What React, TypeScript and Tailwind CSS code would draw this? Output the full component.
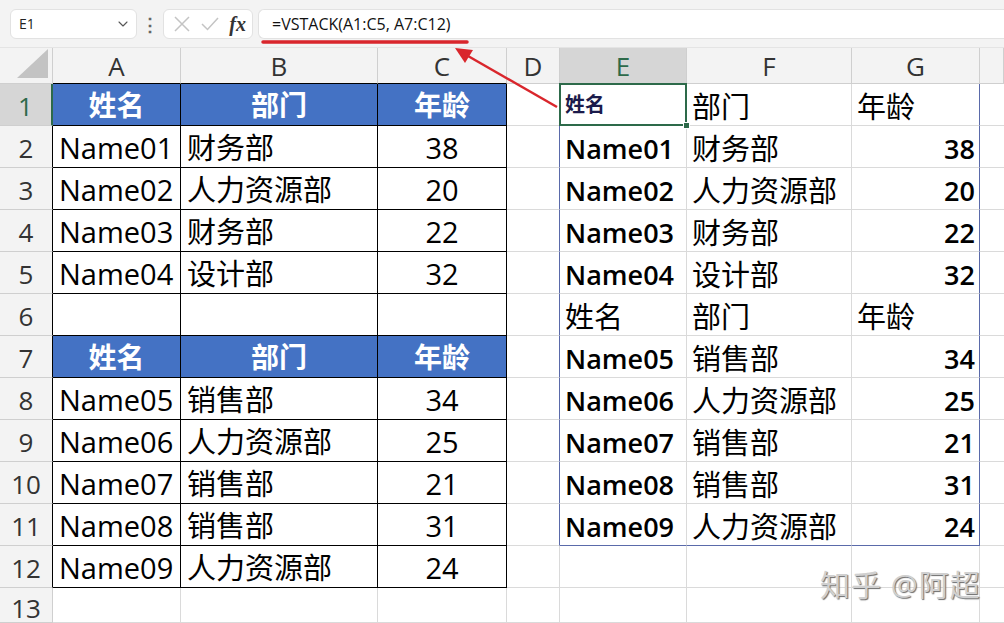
import { ChevronDown } from "lucide-react";

const leftRows: string[][] = [
  ["姓名", "部门", "年龄"],
  ["Name01", "财务部", "38"],
  ["Name02", "人力资源部", "20"],
  ["Name03", "财务部", "22"],
  ["Name04", "设计部", "32"],
  ["", "", ""],
  ["姓名", "部门", "年龄"],
  ["Name05", "销售部", "34"],
  ["Name06", "人力资源部", "25"],
  ["Name07", "销售部", "21"],
  ["Name08", "销售部", "31"],
  ["Name09", "人力资源部", "24"],
];

const rightRows: string[][] = [
  ["姓名", "部门", "年龄"],
  ["Name01", "财务部", "38"],
  ["Name02", "人力资源部", "20"],
  ["Name03", "财务部", "22"],
  ["Name04", "设计部", "32"],
  ["姓名", "部门", "年龄"],
  ["Name05", "销售部", "34"],
  ["Name06", "人力资源部", "25"],
  ["Name07", "销售部", "21"],
  ["Name08", "销售部", "31"],
  ["Name09", "人力资源部", "24"],
];

const colLetters = ["A", "B", "C", "D", "E", "F", "G", ""];

function LeftCell({ r, c }: { r: number; c: number }) {
  const text = leftRows[r - 1][c];
  const head = r === 1 || r === 7;
  if (head) {
    return (
      <div className="flex items-center justify-center border-r border-b border-black bg-[#4472c4] pt-[1px] text-[28px] font-bold text-white">
        {text}
      </div>
    );
  }
  return (
    <div
      className={`flex items-center border-r border-b border-black bg-white pt-[3px] text-[29px] text-black ${
        c === 2 ? "justify-center" : "justify-start pl-[6px]"
      }`}
    >
      {text}
    </div>
  );
}

function RightCell({ r, c }: { r: number; c: number }) {
  const text = r <= 11 ? rightRows[r - 1][c] : "";
  const rightEdge = c === 2 && r <= 11;
  const bottomEdge = r === 11;
  const border = `border-r border-b ${rightEdge ? "border-r-[#5a6aaa]" : "border-r-[#dadada]"} ${
    bottomEdge ? "border-b-[#5a6aaa]" : "border-b-[#dadada]"
  }`;
  if (r === 1 && c === 0) {
    return (
      <div className={`relative flex items-center pl-[5px] ${border}`}>
        <span className="text-[20px] font-bold text-[#1b1b4b]">{text}</span>
        <div className="absolute -left-[1px] -top-[1px] -right-[1px] -bottom-[1px] border-2 border-[#2d6a4a]" />
        <div className="absolute -bottom-[4px] -right-[4px] h-[7px] w-[7px] border border-white bg-[#2d6a4a]" />
      </div>
    );
  }
  const latin = /^[A-Za-z0-9]/.test(text);
  return (
    <div
      className={`flex items-center pt-[5px] ${border} ${c === 2 && latin ? "justify-end pr-[4px]" : "justify-start pl-[5px]"}`}
    >
      {latin ? (
        <span className="text-[27px] font-semibold text-black">{text}</span>
      ) : (
        <span className="text-[29px] text-black">{text}</span>
      )}
    </div>
  );
}

function Toolbar() {
  return (
    <div className="flex h-[48px] items-center border-b border-[#e4e4e4] bg-[#f3f3f3] pl-[10px]">
      <div className="flex h-[30px] w-[127px] items-center justify-between rounded-[6px] border border-[#e2e2e2] bg-white pl-[8px] pr-[5px] text-[14px] text-[#222]">
        <span>E1</span>
        <ChevronDown size={16} strokeWidth={1.6} className="text-[#555]" />
      </div>
      <div className="flex w-[26px] justify-center text-[18px] font-bold leading-none text-[#666]">⋮</div>
      <div className="flex h-[30px] w-[90px] items-center justify-between rounded-[6px] border border-[#e2e2e2] bg-white px-[6px]">
        <svg width="18" height="18" viewBox="0 0 18 18" className="ml-[3px]">
          <path d="M2 2 L16 16 M16 2 L2 16" stroke="#c4c4c4" strokeWidth="1.5" fill="none" />
        </svg>
        <svg width="20" height="18" viewBox="0 0 20 18">
          <path d="M2 9 L7.5 14.5 L18 3" stroke="#c4c4c4" strokeWidth="1.5" fill="none" />
        </svg>
        <span className="font-['Liberation_Serif',serif] text-[20px] font-bold italic text-[#333]">fx</span>
      </div>
      <div className="ml-[5px] flex h-[30px] flex-1 items-center rounded-l-[6px] border border-r-0 border-[#e2e2e2] bg-white pl-[13px] text-[16px] text-[#111]">
        =VSTACK(A1:C5, A7:C12)
      </div>
    </div>
  );
}

function RowHeader({ r }: { r: number }) {
  if (r === 1) {
    return (
      <div className="flex items-center justify-center border-r-2 border-b border-r-[#2d6a4a] border-b-[#cfcfcf] bg-[#d6d6d6] pt-[3px] text-[26px] text-[#2d6a4a]">
        {r}
      </div>
    );
  }
  if (r === 13) {
    return (
      <div className="border-r border-b border-[#cfcfcf] bg-[#f3f3f3] pt-[7px] text-center text-[26px] leading-[26px] text-[#333]">
        {r}
      </div>
    );
  }
  return (
    <div className="flex items-center justify-center border-r border-b border-r-black border-b-[#cfcfcf] bg-[#f3f3f3] pt-[3px] text-[26px] text-[#333]">
      {r}
    </div>
  );
}

function RowLine({ r }: { r: number }) {
  const inLeft = r <= 12;
  return (
    <>
      <RowHeader r={r} />
      {[0, 1, 2].map((c) =>
        inLeft ? (
          <LeftCell key={c} r={r} c={c} />
        ) : (
          <div key={c} className="border-r border-b border-[#dadada]" />
        )
      )}
      <div
        className={`border-r border-b border-b-[#dadada] ${r <= 11 ? "border-r-[#5a6aaa]" : "border-r-[#dadada]"}`}
      />
      {[0, 1, 2].map((c) => (
        <RightCell key={c} r={r} c={c} />
      ))}
      <div className="border-b border-[#dadada]" />
    </>
  );
}

export default function App() {
  const rows = Array.from({ length: 13 }, (_, i) => i + 1);
  return (
    <div className="relative h-[623px] w-[1004px] overflow-hidden bg-white font-['Open_Sans','Noto_Sans_CJK_SC',sans-serif]">
      <Toolbar />
      <div className="grid h-[575px] grid-cols-[53px_128px_197px_129px_53px_127px_165px_128px_1fr] grid-rows-[36px_repeat(12,42px)_1fr]">
        {/* column headers */}
        <div className="relative border-r border-b border-[#cfcfcf] bg-[#f3f3f3]">
          <svg width="32" height="30" viewBox="0 0 32 30" className="absolute bottom-[4px] right-[3px]">
            <polygon points="31,0 31,29 0,29" fill="#c3c3c3" />
          </svg>
        </div>
        {colLetters.map((l, i) => (
          <div
            key={l + i}
            className={`flex items-center justify-center border-r pt-[2px] text-[26px] ${
              i === 4
                ? "border-b border-b-[#cfcfcf] border-r-[#cfcfcf] bg-[#d6d6d6] text-[#2d6a4a]"
                : i < 3
                ? "border-b border-b-black border-r-[#cfcfcf] bg-[#f3f3f3] text-[#333]"
                : "border-b border-b-[#cfcfcf] border-r-[#cfcfcf] bg-[#f3f3f3] text-[#333]"
            }`}
          >
            {l}
          </div>
        ))}
        {rows.map((r) => (
          <RowLine key={r} r={r} />
        ))}
      </div>

      {/* annotation arrow */}
      <svg className="pointer-events-none absolute left-0 top-0" width="1004" height="623">
        <line x1="263" y1="42" x2="467" y2="42" stroke="#d9262c" strokeWidth="3.5" strokeLinecap="round" />
        <line x1="557" y1="107" x2="468" y2="56" stroke="#d9262c" strokeWidth="2.5" />
        <polygon points="455,48 473,50 465,63" fill="#d9262c" />
      </svg>

      <div className="absolute left-[820px] top-[562px] text-[30px] tracking-[1px] text-[#d0d0d0] [text-shadow:1px_1px_1px_#6b6b6b]">
        知乎 @阿超
      </div>
    </div>
  );
}
